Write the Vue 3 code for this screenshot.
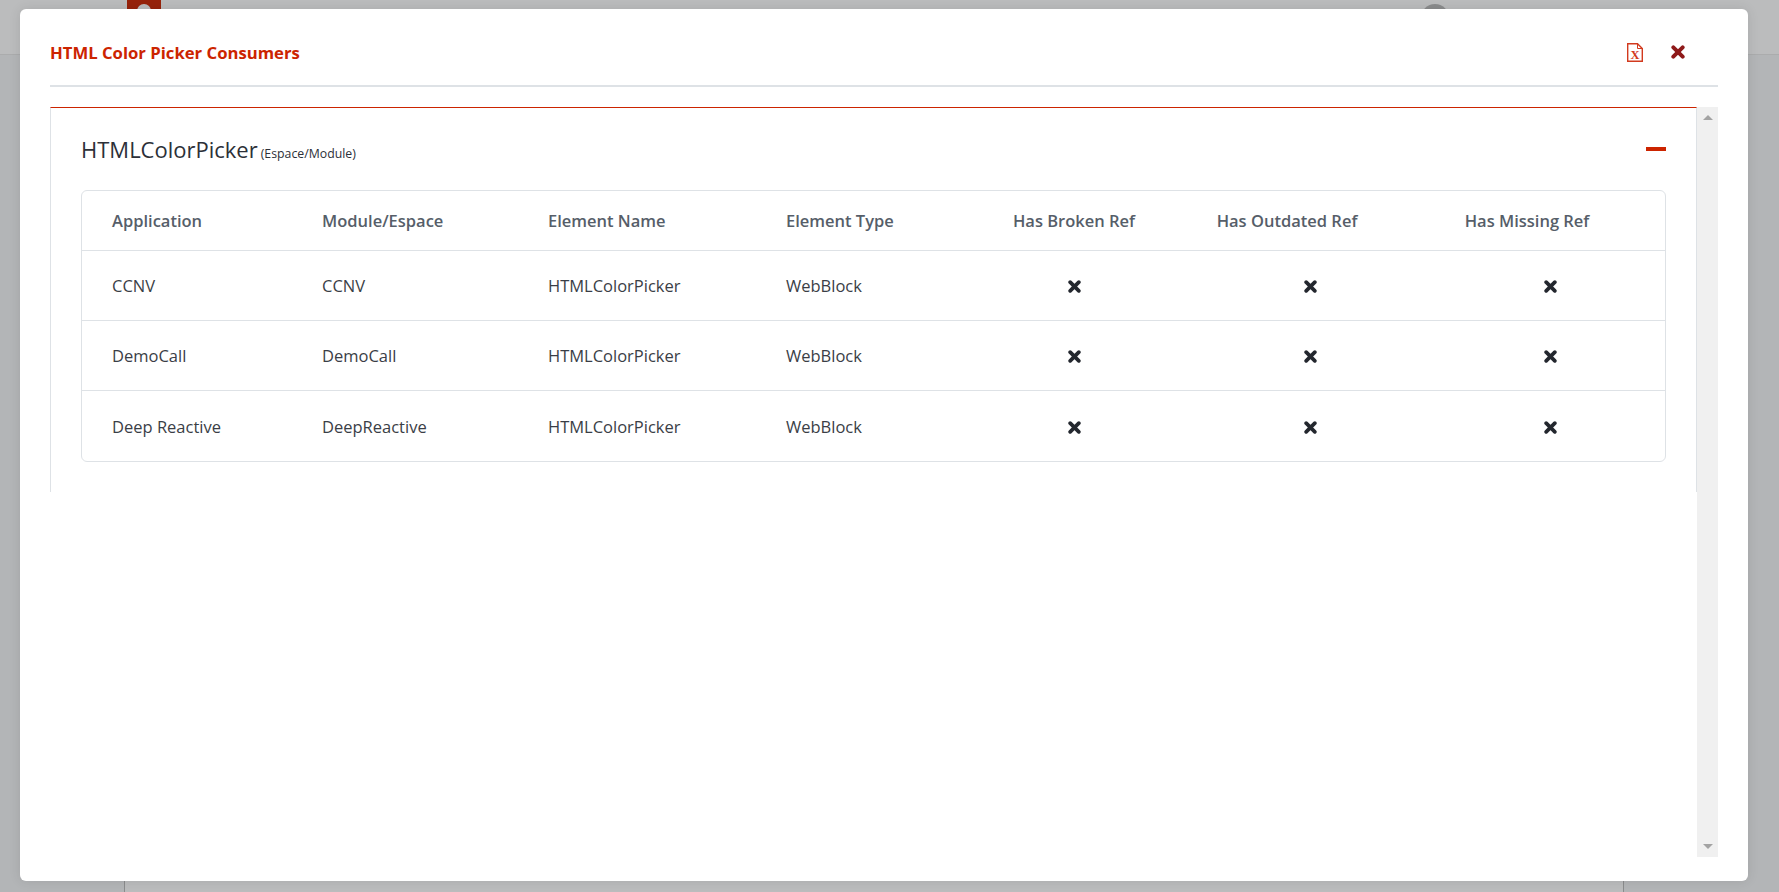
<script setup>
const rows = [
  { app: 'CCNV', mod: 'CCNV' },
  { app: 'DemoCall', mod: 'DemoCall' },
  { app: 'Deep Reactive', mod: 'DeepReactive' }
]
</script>

<template>
  <div class="page">
    <header class="topbar">
      <span class="brand"><i></i></span>
      <span class="avatar"></span>
    </header>
    <div class="pagebody"><div class="panel"></div></div>

    <div class="backdrop"></div>

    <section class="modal" role="dialog">
      <div class="mhead">
        <h2 class="mtitle">HTML Color Picker Consumers</h2>
        <div class="actions">
          <svg class="xls" viewBox="0 0 16 19" width="16" height="19">
            <path d="M.7.7H10.5L15.3 5.5V18.3H.7Z" fill="none" stroke="#d23a1e" stroke-width="1.4"/>
            <path d="M10.5.7V5.5H15.3" fill="none" stroke="#d23a1e" stroke-width="1"/>
            <text x="8" y="16" text-anchor="middle" class="xlstext">X</text>
          </svg>
          <svg class="close" viewBox="0 0 12 12" width="14" height="14">
            <path d="M2 2L10 10M10 2L2 10" stroke="#8f1a1a" stroke-width="3.4" stroke-linecap="round"/>
          </svg>
        </div>
      </div>

      <div class="scrollarea">
        <div class="content">
          <div class="card">
            <div class="cardhead">
              <div class="cardtitle">HTMLColorPicker<small>(Espace/Module)</small></div>
              <span class="minus"></span>
            </div>
            <div class="tablewrap">
              <table>
                <colgroup>
                  <col class="c1" /><col class="c2" /><col class="c3" /><col class="c4" />
                  <col class="c5" /><col class="c6" /><col class="c7" />
                </colgroup>
                <thead>
                  <tr>
                    <th>Application</th>
                    <th>Module/Espace</th>
                    <th>Element Name</th>
                    <th>Element Type</th>
                    <th class="mid">Has Broken Ref</th>
                    <th class="mid shift">Has Outdated Ref</th>
                    <th class="mid shift">Has Missing Ref</th>
                  </tr>
                </thead>
                <tbody>
                  <tr v-for="r in rows" :key="r.app">
                    <td>{{ r.app }}</td>
                    <td>{{ r.mod }}</td>
                    <td>HTMLColorPicker</td>
                    <td>WebBlock</td>
                    <td v-for="n in 3" :key="n" class="mid">
                      <svg class="no" viewBox="0 0 12 12" width="13" height="13">
                        <path d="M2 2L10 10M10 2L2 10" stroke="#23272e" stroke-width="3.4" stroke-linecap="round"/>
                      </svg>
                    </td>
                  </tr>
                </tbody>
              </table>
            </div>
          </div>
        </div>
        <div class="scrollbar">
          <span class="arrow up"></span>
          <span class="arrow down"></span>
        </div>
      </div>
    </section>
  </div>
</template>

<style>
html, body { margin: 0; height: 100%; overflow: hidden; background: #fff; }
</style>

<style scoped>
.page {
  position: relative;
  width: 1779px;
  height: 892px;
  overflow: hidden;
  background: #f4f5f6;
  font-family: "Open Sans", "Noto Sans", sans-serif;
  color: #2c3038;
}
.topbar {
  height: 54px;
  background: #fff;
  border-bottom: 1px solid #e8e8e8;
  position: relative;
}
.brand {
  position: absolute;
  left: 127px;
  top: 0;
  width: 34px;
  height: 34px;
  background: #cc2400;
}
.brand i {
  position: absolute;
  left: 10px;
  top: 4px;
  width: 14px;
  height: 14px;
  border-radius: 50%;
  background: #fff;
}
.avatar {
  position: absolute;
  left: 1421px;
  top: 4px;
  width: 28px;
  height: 28px;
  border-radius: 50%;
  background: #bbb;
}
.pagebody {
  height: 837px;
  padding: 0 155px 0 124px;
}
.panel {
  height: 100%;
  border-left: 1px solid #bbb;
  border-right: 1px solid #bbb;
  background: #fff;
}
.backdrop {
  position: absolute;
  inset: 0;
  background: rgba(30, 32, 36, 0.3);
}
.modal {
  position: absolute;
  left: 20px;
  top: 9px;
  width: 1728px;
  height: 872px;
  box-sizing: border-box;
  padding: 0 30px;
  background: #fff;
  border-radius: 6px;
  box-shadow: 0 0 12px rgba(0, 0, 0, 0.1);
}
.mhead {
  height: 76px;
  box-sizing: content-box;
  border-bottom: 2px solid #dee2e6;
  display: flex;
  align-items: center;
  justify-content: space-between;
}
.mtitle {
  margin: 0;
  font-size: 16.7px;
  font-weight: 700;
  color: #cc2400;
  position: relative;
  top: 5px;
}
.actions {
  display: flex;
  align-items: center;
  gap: 28px;
  padding-right: 33px;
  position: relative;
  top: 5px;
}
.xlstext {
  font-family: "Liberation Serif", serif;
  font-size: 12.5px;
  font-weight: 700;
  fill: #d23a1e;
}
.scrollarea {
  margin-top: 20px;
  height: 750px;
  display: flex;
}
.content {
  flex: 1;
  min-width: 0;
}
.card {
  height: 385px;
  box-sizing: border-box;
  border-top: 1px solid #cc2400;
  border-left: 1px solid #dee2e6;
  border-right: 1px solid #dee2e6;
  padding: 0 30px;
}
.cardhead {
  height: 82px;
  display: flex;
  align-items: flex-start;
  justify-content: space-between;
}
.cardtitle {
  margin-top: 26px;
  font-size: 22px;
  line-height: 30px;
  color: #2c3038;
}
.cardtitle small {
  font-size: 12.3px;
  margin-left: 3px;
}
.minus {
  margin-top: 39px;
  width: 20px;
  height: 3.5px;
  background: #cc2400;
}
.tablewrap {
  border: 1px solid #dee2e6;
  border-radius: 6px;
  overflow: hidden;
}
table {
  width: 100%;
  border-collapse: collapse;
  table-layout: fixed;
}
.c1 { width: 210px; }
.c2 { width: 226px; }
.c3 { width: 238px; }
.c4 { width: 207px; }
.c5 { width: 222px; }
.c6 { width: 250px; }
th {
  height: 58.8px;
  padding: 0 0 0 30px;
  text-align: left;
  font-weight: 600;
  color: #565e69;
  font-size: 16.5px;
}
td {
  height: 69.3px;
  padding: 0 0 0 30px;
  border-top: 1px solid #dee2e6;
  font-weight: 400;
  font-size: 16.5px;
  color: #3a3e46;
}
th.mid, td.mid {
  padding: 0;
  text-align: center;
}
th.shift { padding-right: 46px; }
.no { display: inline-block; vertical-align: middle; position: relative; top: -1px; }
.scrollbar {
  width: 21px;
  background: #f0f0f0;
  position: relative;
  flex: none;
}
.arrow {
  position: absolute;
  left: 6px;
  width: 0;
  height: 0;
  border-left: 5px solid transparent;
  border-right: 5px solid transparent;
}
.arrow.up { top: 8px; border-bottom: 5px solid #a3a3a3; }
.arrow.down { bottom: 8px; border-top: 5px solid #a3a3a3; }
</style>
